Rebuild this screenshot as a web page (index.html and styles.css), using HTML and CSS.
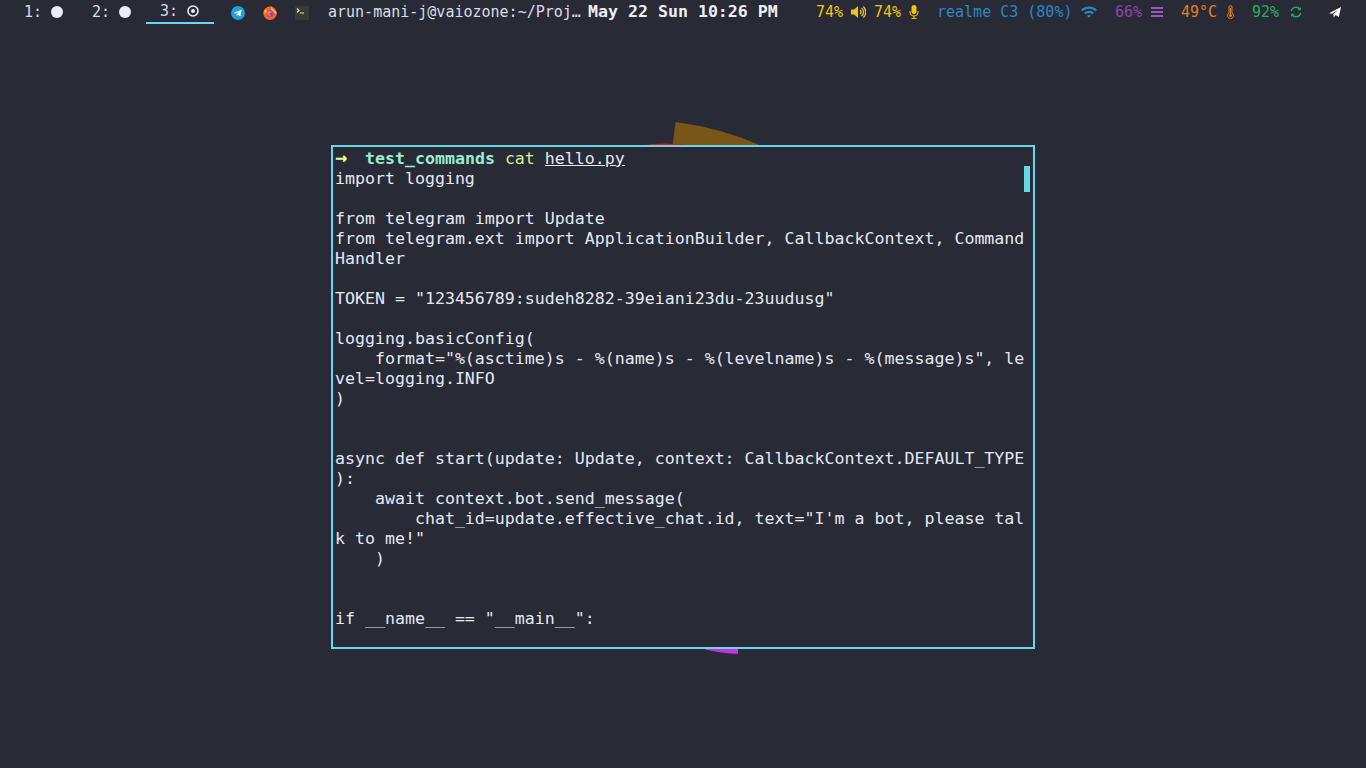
FILE: index.html
```html
<!DOCTYPE html>
<html lang="en">
<head>
<meta charset="utf-8">
<title>Desktop</title>
<link rel="stylesheet" href="styles.css">
</head>
<body>
<header class="bar">
  <nav class="workspaces">
    <div class="ws"><span>1:</span><svg class="ws-icon" viewBox="0 0 12 12"><circle cx="6" cy="6" r="6" fill="#ecedf6"/></svg></div>
    <div class="ws"><span>2:</span><svg class="ws-icon" viewBox="0 0 12 12"><circle cx="6" cy="6" r="6" fill="#ecedf6"/></svg></div>
    <div class="ws ws-active"><span>3:</span><svg class="ws-icon" viewBox="0 0 12 12"><circle cx="6" cy="6" r="5" fill="none" stroke="#ecedf6" stroke-width="1.6"/><circle cx="6" cy="6" r="2" fill="#ecedf6"/></svg></div>
  </nav>
  <div class="apps">
    <svg class="app" viewBox="0 0 14 14"><circle cx="7" cy="7" r="7" fill="#229ed9"/><path d="M2.6 6.9 10.7 3.7 9.4 10.6 6.9 8.8 5.7 10 5.5 8 9.2 5 4.6 7.6Z" fill="#fff"/></svg>
    <svg class="app" viewBox="0 0 14 14"><circle cx="7" cy="7.300" r="6.700" fill="#ff5f2e"/><path d="M7.500 0C9.500 1.300 9 2.800 10.500 3.400 12.800 5 13.800 7 13.600 8.500L8.500 4.500Z" fill="#ffc21f"/><path d="M1 4.500 3 3 4 6 1.500 8Z" fill="#ffb02a"/><circle cx="7.200" cy="7.600" r="3.300" fill="#8a3fe0"/><path d="M5 5.500C6.500 4.800 8.800 5.300 9.400 6.800 8.400 6.400 7 6.400 6.600 7.400 6.300 8.400 7.400 9.300 8.800 9.200 7.400 10.400 4.800 10 4.400 7.800 4.300 7 4.500 6.200 5 5.500Z" fill="#ff8a1f"/></svg>
    <svg class="app" viewBox="0 0 14 14"><rect width="14" height="14" rx="1" fill="#3a3a36"/><path d="M2 2.500 4 4.500 2 6.500" fill="none" stroke="#f2e27a" stroke-width="1.200"/><path d="M5 7h4" stroke="#ddd" stroke-width="1"/></svg>
  </div>
  <div class="title">arun-mani-j@vaiozone:~/Proj…</div>
  <time class="clock">May 22 Sun 10:26 PM</time>
  <div class="status">
    <div class="st st-volume"><span>74%</span>
      <svg class="ic-vol" viewBox="0 0 15 12"><path d="M0 3.500h3.200l3.800-3.500v12L3.200 8.500H0Z" fill="#f1c40f"/><path d="M9 4a2.500 2.500 0 0 1 0 4M10.500 2a5 5 0 0 1 0 8M12.300.5a7.500 7.500 0 0 1 0 11" fill="none" stroke="#f1c40f" stroke-width="1.300"/></svg>
    </div>
    <div class="st st-mic"><span>74%</span>
      <svg class="ic-mic" viewBox="0 0 10 14"><rect x="2.500" y="0" width="5" height="9" rx="2.500" fill="#f1c40f"/><path d="M1 6v1a4 4 0 0 0 8 0V6M5 11v2M2.500 13.500h5" fill="none" stroke="#f1c40f" stroke-width="1.100"/></svg>
    </div>
    <div class="st st-net"><span>realme C3 (80%)</span>
      <svg class="ic-wifi" viewBox="0 0 16 12"><path d="M0 3.800C4.500-.6 11.500-.6 16 3.800L14.500 5.300C10.800 1.900 5.200 1.900 1.500 5.300Z M3 6.800C5.800 4.100 10.200 4.100 13 6.800L11.500 8.300C9.500 6.500 6.500 6.500 4.500 8.300Z M6 9.700C7.200 8.700 8.800 8.700 10 9.700L8 11.800Z" fill="#2e86c1"/></svg>
    </div>
    <div class="st st-mem"><span>66%</span>
      <svg class="ic-mem" viewBox="0 0 12 10"><path d="M0 0h12v2H0ZM0 4h12v2H0ZM0 8h12v2H0Z" fill="#9b59b6"/></svg>
    </div>
    <div class="st st-temp"><span>49°C</span>
      <svg class="ic-temp" viewBox="0 0 8 14"><path d="M2.500 8V2a1.500 1.500 0 0 1 3 0v6a3 3 0 1 1-3 0Z" fill="none" stroke="#e67e22" stroke-width="1"/><path d="M4 3v6.500" stroke="#e67e22" stroke-width="1.200"/><circle cx="4" cy="10.500" r="1.500" fill="#e67e22"/></svg>
    </div>
    <div class="st st-bat"><span>92%</span>
      <svg class="ic-sync" viewBox="0 0 14 12"><path d="M2.200 5A5 5 0 0 1 11 3.200M11.800 7A5 5 0 0 1 3 8.800" fill="none" stroke="#27ae60" stroke-width="1.400"/><path d="M11.800.8v3.400H8.500ZM2.200 11.200V7.800H5.500Z" fill="#27ae60"/></svg>
    </div>
    <svg class="ic-tray" viewBox="0 0 12 11"><path d="M0 6.200 12 0 9.800 10 6.600 8 4.800 10.600 4.300 7.300 9 3 3 6.800Z" fill="#fff"/></svg>
  </div>
</header>

<svg class="wallpaper" viewBox="0 0 1366 768">
  <path d="M675.500 122Q722 128 762 146L672.500 146Z" fill="#7a5518"/>
  <path d="M643 146Q650 143.600 665 143.600L686 144.500 686 146Z" fill="#e81010"/>
  <path d="M700 648 738 648 738 654Q716 653 700 648Z" fill="#c233dd"/>
</svg>

<main class="terminal">
<pre class="output"><b class="arrow">→</b>  <b class="dir">test_commands</b> <span class="cmd">cat</span> <u>hello.py</u>
import logging

from telegram import Update
from telegram.ext import ApplicationBuilder, CallbackContext, Command
Handler

TOKEN = "123456789:sudeh8282-39eiani23du-23uudusg"

logging.basicConfig(
    format="%(asctime)s - %(name)s - %(levelname)s - %(message)s", le
vel=logging.INFO
)


async def start(update: Update, context: CallbackContext.DEFAULT_TYPE
):
    await context.bot.send_message(
        chat_id=update.effective_chat.id, text="I'm a bot, please tal
k to me!"
    )


if __name__ == "__main__":</pre>
  <div class="scroll-thumb"></div>
</main>
</body>
</html>
```
FILE: styles.css
```css
* { box-sizing: border-box; }
html, body { margin: 0; height: 100%; }
body {
  background: #282a36;
  color: #e6e8f4;
  font-family: "DejaVu Sans Mono", "Liberation Mono", monospace;
  overflow: hidden;
  position: relative;
}
.bar {
  display: flex;
  align-items: flex-start;
  height: 26px;
  padding-left: 10px;
  font-size: 15px;
  line-height: 24px;
  position: relative;
  z-index: 2;
}
.workspaces { display: flex; }
.ws {
  width: 68px;
  height: 24px;
  padding-left: 14px;
  display: flex;
  align-items: center;
  color: #dcdce6;
}
.ws-icon { width: 12px; height: 12px; margin-left: 9px; }
.ws-active { border-bottom: 2px solid #66d9ef; }
.apps { display: flex; gap: 18px; margin-left: 17px; height: 24px; align-items: center; margin-top: 1px; }
.app { width: 14px; height: 14px; display: block; }
.title { margin-left: 19px; width: 252px; color: #dcdce6; white-space: nowrap; }
.clock { margin-left: 8px; font-size: 16.6px; font-weight: 700; color: #eeeef6; width: 190px; white-space: nowrap; }
.status { display: flex; align-items: center; height: 24px; margin-left: 38px; }
.st { display: flex; align-items: center; white-space: nowrap; }
.st span { display: block; }
.st svg { display: block; }
.st-volume { color: #f1c40f; width: 58px; }
.ic-vol { width: 15px; height: 12px; margin-left: 8px; }
.st-mic { color: #f1c40f; width: 63px; }
.ic-mic { width: 10px; height: 14px; margin-left: 8px; }
.st-net { color: #2e86c1; width: 178px; }
.ic-wifi { width: 16px; height: 12px; margin-left: 9px; }
.st-mem { color: #8e44ad; width: 66px; }
.ic-mem { width: 12px; height: 10px; margin-left: 9px; }
.st-temp { color: #e67e22; width: 71px; }
.ic-temp { width: 9px; height: 14px; margin-left: 9px; }
.st-bat { color: #27ae60; width: 77px; }
.ic-sync { width: 14px; height: 12px; margin-left: 10px; }
.ic-tray { width: 12px; height: 11px; display: block; }
.wallpaper {
  position: absolute;
  left: 0;
  top: 0;
  width: 1366px;
  height: 768px;
}
.terminal {
  position: absolute;
  left: 331px;
  top: 145px;
  width: 704px;
  height: 504px;
  border: 2px solid #66d9e8;
  background: #282a36;
  padding: 2px 0 0 2px;
}
.output {
  margin: 0;
  font: 16.6px/20px "DejaVu Sans Mono", "Liberation Mono", monospace;
  color: #e6e8f4;
}
.arrow { color: #f1fa8c; font-size: 20px; line-height: 0; letter-spacing: -2.04px; }
.dir { color: #9aedd0; }
.cmd { color: #d8f08c; }
.scroll-thumb {
  position: absolute;
  left: 691px;
  top: 19px;
  width: 6px;
  height: 26px;
  background: #66d9e8;
}
```
